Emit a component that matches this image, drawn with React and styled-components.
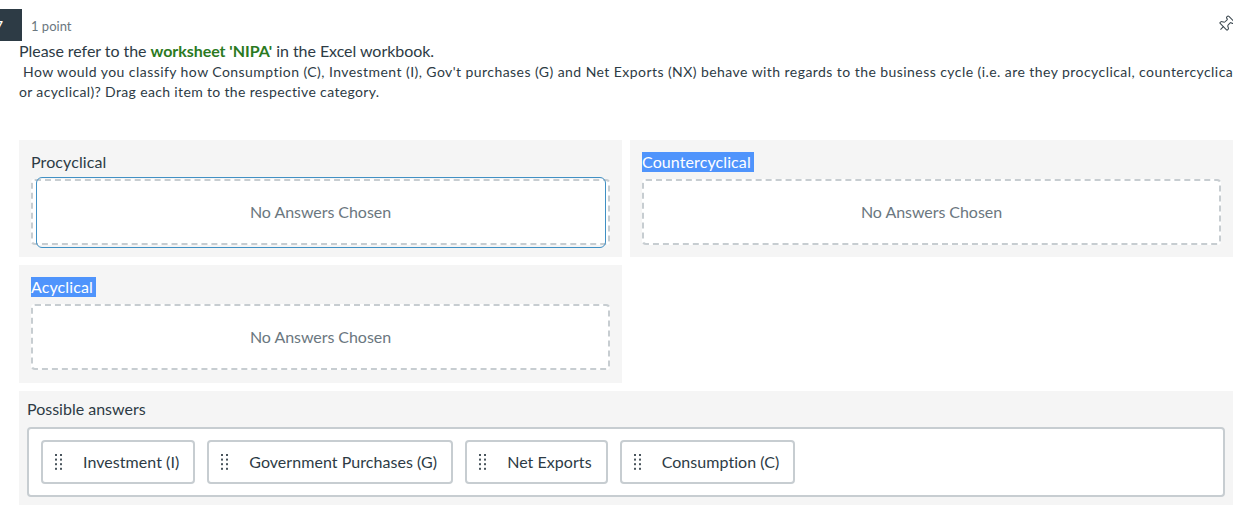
import styled, { createGlobalStyle } from "styled-components";
import { Pin } from "lucide-react";

const GlobalStyle = createGlobalStyle`
  html, body {
    margin: 0;
    padding: 0;
    background: #fff;
    overflow: hidden;
  }
  body {
    font-family: Lato, "Open Sans", sans-serif;
    color: #2d3b45;
  }
`;

const Page = styled.div`
  width: 1233px;
  height: 531px;
  overflow: hidden;
`;

const Header = styled.div`
  display: flex;
  align-items: center;
  height: 32px;
  margin-top: 9px;
`;

const Badge = styled.div`
  width: 22px;
  height: 32px;
  background: #2d3b45;
  color: #fff;
  font-size: 12px;
  font-weight: 700;
  line-height: 32px;
  text-indent: -4px;
  overflow: hidden;
`;

const Points = styled.span`
  margin-left: 9px;
  margin-top: 2px;
  font-size: 13px;
  color: #6b7780;
`;

const PinButton = styled.span`
  display: flex;
  margin-left: auto;
  margin-right: -2px;
  margin-top: -2px;
  color: #3c4850;
  transform: rotate(45deg);
`;

const Question = styled.div`
  margin-top: -1px;
  padding-left: 19px;
  white-space: nowrap;
  overflow: hidden;
`;

const Lead = styled.p`
  margin: 0;
  font-size: 16px;
  line-height: 22px;
  letter-spacing: -0.05px;
`;

const Green = styled.strong`
  color: #2b7a1f;
  font-weight: 700;
`;

const Prompt = styled.p`
  margin: 0;
  font-size: 14px;
  line-height: 20px;
  letter-spacing: ${({ $spacing }) => $spacing};
  white-space: pre;
`;

const Categories = styled.div`
  display: grid;
  grid-template-columns: 603px 603px;
  column-gap: 8px;
  row-gap: 8px;
  margin: 38px 0 0 19px;
`;

const Panel = styled.section`
  background: #f5f5f5;
  padding: 12px;
  height: ${({ $height }) => $height || 117}px;
  box-sizing: border-box;
  position: relative;
`;

const Label = styled.div`
  font-size: 16px;
  line-height: 20px;
  height: 27px;
  letter-spacing: 0.1px;
  color: #2d3b45;
`;

const Selected = styled.span`
  background: #4f94fc;
  color: #fff;
  display: inline-block;
  padding-right: 3px;
`;

const DropZone = styled.div`
  height: 66px;
  box-sizing: border-box;
  border: 2px dashed #c7cdd1;
  border-radius: 4px;
  padding-bottom: 2px;
  background: #fff;
  display: flex;
  align-items: center;
  justify-content: center;
  font-size: 16px;
  letter-spacing: -0.05px;
  color: #6b7780;
`;

const FocusRing = styled.div`
  position: absolute;
  left: 17px;
  right: 16px;
  top: 37px;
  height: 71px;
  box-sizing: border-box;
  border: 1px solid #4190c4;
  border-radius: 6px;
`;

const Answers = styled.section`
  margin: 8px 0 0 19px;
  width: 1214px;
  height: 114px;
  box-sizing: border-box;
  background: #f5f5f5;
  padding: 8px;
`;

const AnswersLabel = styled.div`
  font-size: 16px;
  line-height: 20px;
  height: 28px;
`;

const AnswerBox = styled.div`
  display: flex;
  align-items: center;
  gap: 12px;
  width: 1198px;
  height: 70px;
  box-sizing: border-box;
  padding: 0 12px;
  background: #fff;
  border: 2px solid #c7cdd1;
  border-radius: 4px;
`;

const Chip = styled.div`
  display: flex;
  align-items: center;
  height: 44px;
  box-sizing: border-box;
  padding: 0 14px 2px 10px;
  border: 2px solid #c7cdd1;
  border-radius: 4px;
  background: #fff;
  font-size: 16px;
  letter-spacing: 0.05px;
  color: #2d3b45;
`;

const Handle = styled.svg`
  width: 10px;
  height: 16px;
  margin-top: 2px;
  margin-right: 20px;
  color: #4a555d;
`;

const DragHandle = () => (
  <Handle viewBox="0 0 10 16" fill="currentColor">
    {[2, 7].map((x) =>
      [0, 4.6, 9.2, 13.8].map((y) => (
        <rect key={`${x}-${y}`} x={x} y={y} width="2" height="2" />
      ))
    )}
  </Handle>
);

const answers = [
  "Investment (I)",
  "Government Purchases (G)",
  "Net Exports",
  "Consumption (C)",
];

export default function App() {
  return (
    <Page>
      <GlobalStyle />
      <Header>
        <Badge>7</Badge>
        <Points>1 point</Points>
        <PinButton>
          <Pin size={18} strokeWidth={1.4} />
        </PinButton>
      </Header>
      <Question>
        <Lead>
          Please refer to the <Green>worksheet 'NIPA'</Green> in the Excel workbook.
        </Lead>
        <Prompt $spacing="0.44px">
          {" How would you classify how Consumption (C), Investment (I), Gov't purchases (G) and Net Exports (NX) behave with regards to the business cycle (i.e. are they procyclical, countercyclical"}
        </Prompt>
        <Prompt $spacing="0.35px">or acyclical)? Drag each item to the respective category.</Prompt>
      </Question>
      <Categories>
        <Panel>
          <Label>Procyclical</Label>
          <DropZone>No Answers Chosen</DropZone>
          <FocusRing />
        </Panel>
        <Panel>
          <Label>
            <Selected>Countercyclical</Selected>
          </Label>
          <DropZone>No Answers Chosen</DropZone>
        </Panel>
        <Panel $height={118}>
          <Label>
            <Selected>Acyclical</Selected>
          </Label>
          <DropZone>No Answers Chosen</DropZone>
        </Panel>
      </Categories>
      <Answers>
        <AnswersLabel>Possible answers</AnswersLabel>
        <AnswerBox>
          {answers.map((answer) => (
            <Chip key={answer}>
              <DragHandle />
              {answer}
            </Chip>
          ))}
        </AnswerBox>
      </Answers>
    </Page>
  );
}
